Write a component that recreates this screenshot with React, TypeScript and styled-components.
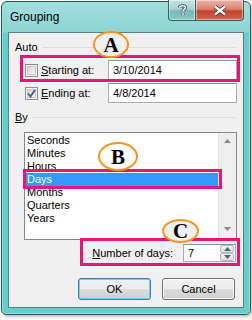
import React from "react";
import styled, { createGlobalStyle } from "styled-components";

const Global = createGlobalStyle`
  html, body { margin: 0; padding: 0; background: #ffffff; }
  body { width: 252px; height: 320px; overflow: hidden; font-family: "Liberation Sans", Arial, sans-serif; }
`;

const Window = styled.div`
  box-sizing: border-box;
  margin: 1px 0 0 1px;
  width: 250px;
  height: 314px;
  border: 1px solid #2f5356;
  border-radius: 6px 6px 5px 5px;
  background: linear-gradient(#a3dedc 0px, #8cd6d3 30px, #66cfca 31px, #66cfca 100%);
  box-shadow: inset 0 0 0 1px #8fe0dc, 1px 2px 3px rgba(0, 0, 0, 0.25);
  display: flex;
  flex-direction: column;
`;

const TitleBar = styled.div`
  height: 30px;
  display: flex;
  align-items: flex-start;
  padding-left: 8px;
  padding-right: 6px;
`;

const Title = styled.div`
  flex: 1;
  font-size: 12px;
  line-height: 14px;
  margin-top: 8px;
  color: #000;
`;

const Controls = styled.div`
  display: flex;
  margin-top: -2px;
`;

const CapBtn = styled.div<{ $w: number; $red?: boolean }>`
  box-sizing: border-box;
  width: ${(p) => p.$w}px;
  height: 21px;
  border: 1px solid #3a5e60;
  border-top: none;
  display: flex;
  align-items: center;
  justify-content: center;
  background: ${(p) =>
    p.$red
      ? "linear-gradient(#eab3a6 0%, #d98671 45%, #c3442c 55%, #d0634a 100%)"
      : "linear-gradient(#c4e4e4 0%, #a5d3d4 45%, #7cb9ba 55%, #8cc6c7 100%)"};
  box-shadow: inset 0 0 0 1px rgba(255, 255, 255, 0.45);
  &:first-child { border-radius: 0 0 0 4px; }
  &:last-child { border-radius: 0 0 4px 0; border-left: none; }
`;

const Client = styled.div`
  flex: 1;
  box-sizing: border-box;
  margin: 0 6px 6px 6px;
  border: 1px solid #5b7f82;
  background: #f0f0f0;
  position: relative;
  padding: 7px 6px 0 6px;
  display: flex;
  flex-direction: column;
  font-size: 11px;
  color: #000;
`;

const GroupHeader = styled.div<{ $mt: number }>`
  height: 14px;
  margin-top: ${(p) => p.$mt}px;
  display: flex;
  align-items: center;
  gap: 4px;
  line-height: 14px;
`;

const Rule = styled.div`
  flex: 1;
  height: 1px;
  background: #d5dfe5;
  margin-right: 1px;
`;

const FieldRow = styled.div<{ $mt: number }>`
  height: 20px;
  margin-top: ${(p) => p.$mt}px;
  display: flex;
  align-items: center;
  padding-left: 10px;
`;

const CheckBox = styled.div`
  box-sizing: border-box;
  width: 13px;
  height: 13px;
  border: 1px solid #8e8f8f;
  background: #f4f4f4;
  display: flex;
  align-items: center;
  justify-content: center;
  position: relative;
  &::before {
    content: "";
    position: absolute;
    inset: 1px;
    border: 1px solid #c8c8c8;
    background: linear-gradient(135deg, #d6d6d6, #f6f6f6);
  }
  svg { position: relative; }
`;

const FieldLabel = styled.div`
  width: 67px;
  margin-left: 3px;
`;

const TextBox = styled.div<{ $w: number; $h: number }>`
  box-sizing: border-box;
  width: ${(p) => p.$w}px;
  height: ${(p) => p.$h}px;
  border: 1px solid #abadb3;
  border-top-color: #8e9196;
  background: #fff;
  display: flex;
  align-items: center;
  padding-left: 4px;
`;

const ListBox = styled.div`
  box-sizing: border-box;
  margin: 8px 0 0 9px;
  width: 213px;
  height: 108px;
  border: 1px solid #828790;
  background: #fff;
  display: flex;
`;

const Items = styled.div`
  flex: 1;
  padding-top: 1px;
  display: flex;
  flex-direction: column;
`;

const Item = styled.div<{ $sel?: boolean }>`
  height: 13px;
  line-height: 13px;
  margin: 0 0 0 1px;
  padding-left: 1px;
  background: ${(p) => (p.$sel ? "#3399ff" : "transparent")};
  color: ${(p) => (p.$sel ? "#fff" : "#000")};
`;

const ScrollBar = styled.div`
  width: 17px;
  background: #eeeeee;
  border-left: 1px solid #e2e2e2;
  display: flex;
  flex-direction: column;
  justify-content: space-between;
  align-items: center;
  padding: 6px 0 8px;
`;

const NumberRow = styled.div`
  height: 18px;
  margin-top: 4px;
  display: flex;
  align-items: center;
  justify-content: flex-end;
  padding-right: 1px;
  gap: 10px;
`;

const SpinBox = styled(TextBox)`
  justify-content: space-between;
  padding-right: 1px;
`;

const Spin = styled.div`
  display: flex;
  flex-direction: column;
  width: 14px;
  height: 16px;
`;

const SpinBtn = styled.div`
  box-sizing: border-box;
  flex: 1;
  border: 1px solid #b8b8b8;
  border-radius: 2px;
  background: linear-gradient(#f4f4f4, #dedede);
  display: flex;
  align-items: center;
  justify-content: center;
`;

const ButtonRow = styled.div`
  margin-top: 16px;
  display: flex;
  justify-content: flex-end;
  gap: 11px;
  padding-right: 2px;
`;

const Button = styled.div<{ $default?: boolean }>`
  box-sizing: border-box;
  width: 73px;
  height: 22px;
  border: 1px solid ${(p) => (p.$default ? "#3c7fb1" : "#707070")};
  border-radius: 3px;
  background: linear-gradient(#f2f2f2 0%, #ebebeb 48%, #dddddd 52%, #cfcfcf 100%);
  box-shadow: inset 0 0 0 1px ${(p) => (p.$default ? "#6fd0f0" : "#fcfcfc")};
  display: flex;
  align-items: center;
  justify-content: center;
`;

const Mark = styled.div<{ $l: number; $t: number; $w: number; $h: number }>`
  position: absolute;
  left: ${(p) => p.$l}px;
  top: ${(p) => p.$t}px;
  width: ${(p) => p.$w}px;
  height: ${(p) => p.$h}px;
  box-sizing: border-box;
  border: 3px solid #ea1476;
  pointer-events: none;
`;

const Badge = styled.div<{ $l: number; $t: number; $w: number; $h: number; $fill: string }>`
  position: absolute;
  left: ${(p) => p.$l}px;
  top: ${(p) => p.$t}px;
  width: ${(p) => p.$w}px;
  height: ${(p) => p.$h}px;
  box-sizing: border-box;
  border: 2px solid #f7941d;
  border-radius: 50%;
  background: ${(p) => p.$fill};
  display: flex;
  align-items: center;
  justify-content: center;
  font-family: "Liberation Serif", "Times New Roman", serif;
  font-weight: bold;
  font-size: 21px;
  line-height: 20px;
  color: #000;
`;

const Check = () => (
  <svg width="9" height="9" viewBox="0 0 9 9">
    <path d="M1 4.5 L3.5 7.5 L8 1" fill="none" stroke="#44579a" strokeWidth="1.8" />
  </svg>
);

const Tri = ({ up, color = "#6b6b6b" }: { up?: boolean; color?: string }) => (
  <svg width="7" height="4" viewBox="0 0 7 4">
    <path d={up ? "M0 4 L3.5 0 L7 4 Z" : "M0 0 L3.5 4 L7 0 Z"} fill={color} />
  </svg>
);

const items = ["Seconds", "Minutes", "Hours", "Days", "Months", "Quarters", "Years"];

export default function App() {
  return (
    <>
      <Global />
      <Window>
        <TitleBar>
          <Title>Grouping</Title>
          <Controls>
            <CapBtn $w={28}>
              <svg width="9" height="12" viewBox="0 0 9 12">
                <path
                  d="M1.5 3.5 C1.5 1.2 7.5 1.2 7.5 3.6 C7.5 5.4 5 5.4 5 7.3 M5 9.2 L5 10.8"
                  fill="none"
                  stroke="#3c4a4c"
                  strokeWidth="3.2"
                />
                <path
                  d="M1.5 3.5 C1.5 1.2 7.5 1.2 7.5 3.6 C7.5 5.4 5 5.4 5 7.3 M5 9.2 L5 10.8"
                  fill="none"
                  stroke="#ffffff"
                  strokeWidth="1.6"
                />
              </svg>
            </CapBtn>
            <CapBtn $w={48} $red>
              <svg width="14" height="11" viewBox="0 0 14 11">
                <path d="M2 1.5 L12 9.5 M12 1.5 L2 9.5" stroke="#4a2620" strokeWidth="4" />
                <path d="M2 1.5 L12 9.5 M12 1.5 L2 9.5" stroke="#ffffff" strokeWidth="2.4" />
              </svg>
            </CapBtn>
          </Controls>
        </TitleBar>
        <Client>
          <GroupHeader $mt={0}>
            <span>Auto</span>
            <Rule />
          </GroupHeader>
          <FieldRow $mt={6}>
            <CheckBox />
            <FieldLabel>
              <u>S</u>tarting at:
            </FieldLabel>
            <TextBox $w={129} $h={20}>3/10/2014</TextBox>
          </FieldRow>
          <FieldRow $mt={3}>
            <CheckBox>
              <Check />
            </CheckBox>
            <FieldLabel>
              <u>E</u>nding at:
            </FieldLabel>
            <TextBox $w={129} $h={20}>4/8/2014</TextBox>
          </FieldRow>
          <GroupHeader $mt={7}>
            <span>
              <u>B</u>y
            </span>
            <Rule />
          </GroupHeader>
          <ListBox>
            <Items>
              {items.map((it) => (
                <Item key={it} $sel={it === "Days"}>
                  {it}
                </Item>
              ))}
            </Items>
            <ScrollBar>
              <Tri up color="#8a8a8a" />
              <Tri color="#8a8a8a" />
            </ScrollBar>
          </ListBox>
          <NumberRow>
            <span>
              <u>N</u>umber of days:
            </span>
            <SpinBox $w={53} $h={18}>
              <span>7</span>
              <Spin>
                <SpinBtn>
                  <Tri up color="#4d6185" />
                </SpinBtn>
                <SpinBtn>
                  <Tri color="#4d6185" />
                </SpinBtn>
              </Spin>
            </SpinBox>
          </NumberRow>
          <ButtonRow>
            <Button $default>OK</Button>
            <Button>Cancel</Button>
          </ButtonRow>

          <Mark $l={11} $t={22} $w={220} $h={27} />
          <Mark $l={14} $t={136} $w={199} $h={20} />
          <Mark $l={71} $t={205} $w={160} $h={28} />
          <Badge $l={84} $t={-2} $w={36} $h={27} $fill="#f0f0f0">A</Badge>
          <Badge $l={89} $t={109} $w={40} $h={29} $fill="#ffffff">B</Badge>
          <Badge $l={153} $t={186} $w={37} $h={24} $fill="#f0f0f0">C</Badge>
        </Client>
      </Window>
    </>
  );
}
